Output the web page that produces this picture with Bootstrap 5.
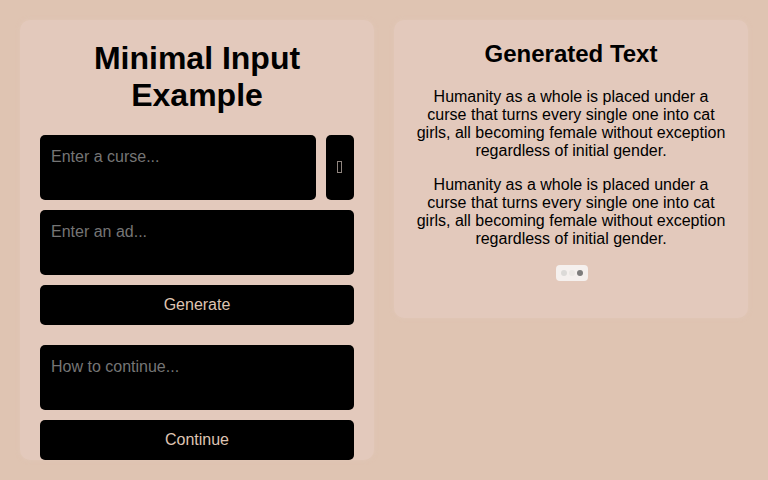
<!DOCTYPE html>
<html lang="en">
<head>
<meta charset="utf-8">
<title>Minimal Input Example</title>
<link rel="stylesheet" href="https://cdn.jsdelivr.net/npm/bootstrap@5.3.0/dist/css/bootstrap.min.css">
<style>
html,body{height:100%;}
body{background:#dfc4b2;color:#000;font-family:"Liberation Sans",Arial,sans-serif;font-size:16px;line-height:18px;overflow:hidden;}
.stage{height:480px;padding:20px;gap:20px;}
.pane{background:#e3c9bc;border-radius:10px;padding:20px;width:354px;flex:0 0 354px;box-shadow:0 0 4px rgba(227,201,188,.6);}
.pane-left{height:440px;}
.pane-right{align-self:flex-start;height:298px;}
.main-title{font-size:32px;font-weight:700;line-height:37px;margin:0 0 21px;text-align:center;}
.side-title{font-size:24px;font-weight:700;line-height:28px;margin:0 0 20px;text-align:center;}
.ink-field{background:#000;color:#dfc4b2;border:0;border-radius:5px;height:65px;padding:13px 11px 11px;width:100%;resize:none;font:16px/18px "Liberation Sans",Arial,sans-serif;display:block;outline:0;}
.ink-field::placeholder{color:#757575;opacity:1;}
.ink-btn{background:#000;color:#dfc4b2;border:0;border-radius:5px;height:40px;width:100%;font:16px/18px "Liberation Sans",Arial,sans-serif;display:block;padding:0;}
.ink-btn:hover{background:#000;color:#dfc4b2;}
.emoji-btn{width:28px;height:65px;flex:0 0 28px;}
.tofu{display:inline-block;width:5px;height:12px;border:1px solid #8f857f;vertical-align:middle;margin:0 0 2px -1px;}
.pair{gap:10px;margin-bottom:10px;}
.stack{margin-bottom:10px;}
.cont{margin-top:20px;}
.story{text-align:center;margin:0 0 16px;}
.dots{width:32px;height:16px;background:#f5f0ee;border-radius:4px;gap:2px;margin:17px 0 0 142px;}
.dot{width:6px;height:6px;border-radius:50%;}
.dot-a{background:#dcdad8;}
.dot-b{background:#ece8e5;}
.dot-c{background:#7d7c7c;}
</style>
</head>
<body>
<div class="stage d-flex">
  <section class="pane pane-left">
    <h1 class="main-title">Minimal Input Example</h1>
    <div class="d-flex pair">
      <textarea class="ink-field" placeholder="Enter a curse..." aria-label="Curse"></textarea>
      <button class="ink-btn emoji-btn" type="button" aria-label="Random"><span class="tofu"></span></button>
    </div>
    <textarea class="ink-field stack" placeholder="Enter an ad..." aria-label="Ad"></textarea>
    <button class="ink-btn" type="button">Generate</button>
    <textarea class="ink-field cont stack" placeholder="How to continue..." aria-label="Continue"></textarea>
    <button class="ink-btn" type="button">Continue</button>
  </section>
  <section class="pane pane-right">
    <h2 class="side-title">Generated Text</h2>
    <p class="story">Humanity as a whole is placed under a curse that turns every single one into cat girls, all becoming female without exception regardless of initial gender.</p>
    <p class="story">Humanity as a whole is placed under a curse that turns every single one into cat girls, all becoming female without exception regardless of initial gender.</p>
    <div class="dots d-flex align-items-center justify-content-center">
      <span class="dot dot-a"></span><span class="dot dot-b"></span><span class="dot dot-c"></span>
    </div>
  </section>
</div>
<script src="https://cdn.jsdelivr.net/npm/bootstrap@5.3.0/dist/js/bootstrap.bundle.min.js"></script>
</body>
</html>
